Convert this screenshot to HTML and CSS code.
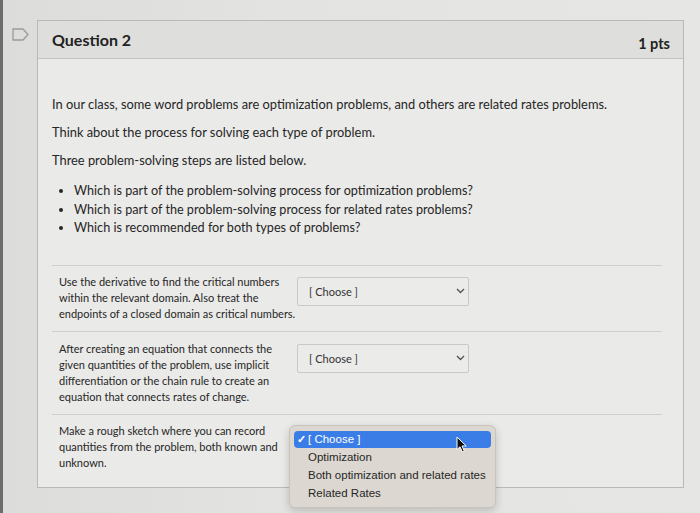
FILE: index.html
```html
<!DOCTYPE html>
<html>
<head>
<meta charset="utf-8">
<link rel="stylesheet" href="styles.css">
</head>
<body>
<div class="page">
  <div class="flag-col">
    <svg class="flag" width="17" height="13" viewBox="0 0 17 13"><path d="M1 1 H11 L16 6.5 L11 12 H1 Z" fill="none" stroke="#9a9a9a" stroke-width="1.3" stroke-linejoin="round"/></svg>
  </div>
  <div class="card">
    <div class="card-head">
      <span class="q-title">Question 2</span>
      <span class="q-pts">1 pts</span>
    </div>
    <div class="card-body">
      <p class="para">In our class, some word problems are optimization problems, and others are related rates problems.</p>
      <p class="para">Think about the process for solving each type of problem.</p>
      <p class="para">Three problem-solving steps are listed below.</p>
      <ul class="bullets">
        <li>Which is part of the problem-solving process for optimization problems?</li>
        <li>Which is part of the problem-solving process for related rates problems?</li>
        <li>Which is recommended for both types of problems?</li>
      </ul>
      <div class="match">
        <div class="row row1">
          <div class="label">Use the derivative to find the critical numbers within the relevant domain. Also treat the endpoints of a closed domain as critical numbers.</div>
          <div class="select-wrap">
            <div class="select"><span>[ Choose ]</span><svg class="chev" width="9" height="6" viewBox="0 0 9 6"><path d="M1 1 L4.5 4.5 L8 1" fill="none" stroke="#555" stroke-width="1.4"/></svg></div>
          </div>
        </div>
        <div class="row row2">
          <div class="label">After creating an equation that connects the given quantities of the problem, use implicit differentiation or the chain rule to create an equation that connects rates of change.</div>
          <div class="select-wrap">
            <div class="select"><span>[ Choose ]</span><svg class="chev" width="9" height="6" viewBox="0 0 9 6"><path d="M1 1 L4.5 4.5 L8 1" fill="none" stroke="#555" stroke-width="1.4"/></svg></div>
          </div>
        </div>
        <div class="row row3">
          <div class="label">Make a rough sketch where you can record quantities from the problem, both known and unknown.</div>
          <div class="select-wrap">
            <div class="select select-open"></div>
            <div class="popup">
              <div class="opt active"><span class="check">✓</span>[ Choose ]</div>
              <div class="opt">Optimization</div>
              <div class="opt">Both optimization and related rates</div>
              <div class="opt">Related Rates</div>
              <svg class="cursor" width="12" height="17" viewBox="0 0 12 17"><path d="M1 1 L1 13.5 L4 10.8 L6.3 15.8 L8.3 14.9 L6 10 L10.2 10 Z" fill="#111" stroke="#fff" stroke-width="1" stroke-linejoin="round"/></svg>
            </div>
          </div>
        </div>
      </div>
    </div>
  </div>
</div>
</body>
</html>
```

FILE: styles.css
```css
html, body {
  margin: 0;
  padding: 0;
}
body {
  width: 700px;
  height: 513px;
  overflow: hidden;
  background: linear-gradient(90deg, #dcdcda 0%, #e3e3e1 40%, #e6e6e4 100%);
  font-family: Lato, "Open Sans", sans-serif;
  color: #262626;
}
.page {
  display: flex;
  align-items: flex-start;
  height: 513px;
  border-left: 3px solid #6d6d6d;
  box-sizing: border-box;
  padding-top: 20px;
}
.flag-col {
  width: 34px;
  flex: none;
  padding-top: 8px;
  padding-left: 9px;
  box-sizing: border-box;
}
.flag {
  display: block;
}
.card {
  width: 647px;
  height: 468px;
  box-sizing: border-box;
  border: 1px solid #b9b9b7;
  background: #eaeae8;
}
.card-head {
  height: 38px;
  box-sizing: border-box;
  background: #dededc;
  border-bottom: 1px solid #c2c2c0;
  display: flex;
  align-items: center;
  justify-content: space-between;
  padding: 0 13px 0 14px;
}
.q-title {
  font-size: 16px;
  font-weight: 700;
  color: #222;
}
.q-pts {
  font-size: 14.5px;
  font-weight: 700;
  color: #222;
  margin-top: 8px;
}
.card-body {
  padding: 36px 21px 0 14px;
}
.para {
  margin: 0 0 10px 0;
  font-size: 12.85px;
  line-height: 18px;
}
.bullets {
  margin: 13px 0 0 0;
  padding-left: 22px;
  font-size: 12.65px;
  line-height: 18.5px;
}
.match {
  margin-top: 27px;
}
.row {
  display: flex;
  align-items: flex-start;
  border-top: 1px solid #cfcfcd;
  padding: 8px 0 9px 7px;
}
.row2 {
  padding-top: 9px;
  padding-bottom: 9px;
}
.row3 {
  padding-top: 8px;
}
.label {
  width: 238px;
  flex: none;
  font-size: 11px;
  line-height: 16px;
  color: #262626;
}
.select-wrap {
  position: relative;
  margin-top: 3px;
}
.select {
  width: 172px;
  height: 29px;
  box-sizing: border-box;
  border: 1px solid #c9c9c7;
  border-radius: 2px;
  background: #ebebe9;
  display: flex;
  align-items: center;
  justify-content: space-between;
  padding: 0 3px 0 11px;
  font-size: 11px;
  color: #333;
}
.chev {
  display: block;
}
.popup {
  position: absolute;
  left: -8px;
  top: -1px;
  width: 207px;
  box-sizing: border-box;
  padding: 5px 4px 5px 4px;
  background: #dcd8d1;
  border: 1px solid #c8c3bb;
  border-radius: 6px;
  box-shadow: 0 3px 8px rgba(0, 0, 0, 0.18);
  font-family: "Liberation Sans", Arial, sans-serif;
  font-size: 11.5px;
  color: #262626;
}
.opt {
  height: 18px;
  line-height: 18px;
  padding-left: 14px;
  position: relative;
  white-space: nowrap;
}
.opt.active {
  height: 17px;
  line-height: 17px;
  background: #3a7de6;
  color: #fff;
  border-radius: 4px;
}
.check {
  position: absolute;
  left: 3px;
  top: 0;
  font-size: 11px;
  font-weight: 700;
}
.cursor {
  position: absolute;
  left: 166px;
  top: 10px;
}
```
